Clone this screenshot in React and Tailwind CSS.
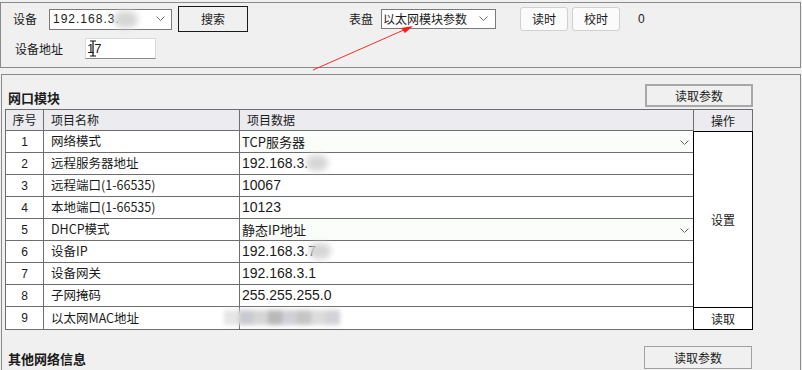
import React from "react";

const CJK = { fontFamily: '"Noto Sans CJK SC", "Noto Sans", sans-serif' };
const NUM = { fontFamily: '"Liberation Sans", "Noto Sans CJK SC", sans-serif' };

function Chevron({ className = "" }) {
  return (
    <svg width="9" height="6" viewBox="0 0 9 6" className={className}>
      <polyline points="0.5,0.5 4.5,4.5 8.5,0.5" fill="none" stroke="#6b6b6b" strokeWidth="1" />
    </svg>
  );
}

function Blur({ className = "" }) {
  return <span className={"absolute rounded-full bg-[#d6d6d6] blur-[3px] " + className} />;
}

const rows = [
  { n: "1", name: "网络模式", data: "TCP服务器", select: true },
  { n: "2", name: "远程服务器地址", data: "192.168.3.", blur: "left-[66px] w-[22px]" },
  { n: "3", name: "远程端口(1-66535)", data: "10067" },
  { n: "4", name: "本地端口(1-66535)", data: "10123" },
  { n: "5", name: "DHCP模式", data: "静态IP地址", select: true },
  { n: "6", name: "设备IP", data: "192.168.3.7", blur: "left-[69px] w-[22px]" },
  { n: "7", name: "设备网关", data: "192.168.3.1" },
  { n: "8", name: "子网掩码", data: "255.255.255.0" },
  { n: "9", name: "以太网MAC地址", data: "", mac: true },
];

export default function App() {
  return (
    <div className="relative w-[802px] h-[370px] overflow-hidden bg-[#f0f0f0] text-[12px] text-[#1a1a1a]" style={CJK}>
      {/* Top panel */}
      <div className="mt-[2px] w-[801px] h-[66px] border border-[#8a8a8a] flex flex-col">
        <div className="flex items-center mt-[3px] h-[26px]">
          <span className="ml-[12px] leading-none">设备</span>
          <div className="relative ml-[12px] w-[123px] h-[21px] bg-white border border-[#7a7a7a] flex items-center">
            <span className="ml-[3px] text-[12px] tracking-[1px]" style={NUM}>192.168.3.</span>
            <Blur className="left-[64px] top-[1px] w-[24px] h-[17px]" />
            <Chevron className="ml-auto mr-[6px]" />
          </div>
          <button className="ml-[6px] w-[70px] h-[26px] border border-[#1a1a1a] bg-[#f0f0f0] text-[12px] leading-none">搜索</button>
          <span className="ml-[101px] leading-none">表盘</span>
          <div className="ml-[8px] w-[115px] h-[20px] bg-white border border-[#7a7a7a] flex items-center">
            <span className="ml-[1px] leading-none">以太网模块参数</span>
            <Chevron className="ml-auto mr-[7px]" />
          </div>
          <button className="ml-[24px] w-[48px] h-[24px] rounded-[3px] border border-[#d0d0d0] bg-[#fbfbfb] leading-none">读时</button>
          <button className="ml-[4px] w-[48px] h-[24px] rounded-[3px] border border-[#d0d0d0] bg-[#fbfbfb] leading-none">校时</button>
          <span className="ml-[18px] leading-none" style={NUM}>0</span>
        </div>
        <div className="flex items-center mt-[6px] h-[21px]">
          <span className="ml-[14px] leading-none">设备地址</span>
          <div className="relative ml-[22px] w-[71px] h-[21px] bg-white border border-[#dadada] border-b-[#8a8a8a] flex items-center">
            <span className="ml-[1px] text-[13px]" style={NUM}>17</span>
            <svg className="absolute left-[3px] top-[1px]" width="8" height="17" viewBox="0 0 8 17">
              <path d="M1 1 H7 M4 1 V16 M1 16 H7" stroke="#111" strokeWidth="1.2" fill="none" />
            </svg>
          </div>
        </div>
      </div>

      {/* Second panel */}
      <div className="mt-[6px] ml-[1px] w-[800px] h-[300px] border border-[#8a8a8a] flex flex-col">
        <div className="flex items-end mt-[9px] h-[23px]">
          <span className="ml-[6px] text-[13px] font-bold leading-none mb-[3px]">网口模块</span>
          <button className="ml-auto mr-[47px] w-[108px] h-[23px] border-2 border-[#a8a8a8] bg-[#f0f0f0] leading-none">读取参数</button>
        </div>

        {/* Table */}
        <div className="mt-[2px] ml-[3px] flex w-[748px]">
          <div className="w-[688px] border border-r-0 border-[#6e6e6e] bg-white">
            <div className="flex h-[21px] bg-[#ebebf0] border-b border-[#6e6e6e] items-center">
              <div className="w-[38px] h-full border-r border-[#6e6e6e] flex items-center justify-center">序号</div>
              <div className="w-[196px] h-full border-r border-[#6e6e6e] flex items-center pl-[7px]">项目名称</div>
              <div className="flex-1 h-full flex items-center pl-[7px]">项目数据</div>
            </div>
            {rows.map((r, i) => (
              <div key={r.n} className={"flex h-[22px] " + (i < rows.length - 1 ? "border-b border-[#6e6e6e]" : "h-[21px]")}>
                <div className="w-[38px] h-full border-r border-[#6e6e6e] flex items-center justify-center" style={NUM}>{r.n}</div>
                <div className="w-[196px] h-full border-r border-[#6e6e6e] flex items-center pl-[7px] text-[12.5px]">{r.name}</div>
                <div className={"relative flex-1 h-full flex items-center pl-[2px] " + (r.select ? "bg-[#fbfdfb]" : "")}>
                  <span className={r.select ? "text-[13px]" : "text-[14px]"} style={r.select ? CJK : NUM}>{r.data}</span>
                  {r.blur && <Blur className={r.blur + " top-[2px] h-[16px]"} />}
                  {r.select && <Chevron className="absolute right-[4px] top-[9px]" />}
                  {r.mac && (
                    <div className="absolute left-[-16px] top-[3px] w-[116px] h-[15px] blur-[2px] flex">
                      <span className="flex-1 bg-[#e6e6e6]" />
                      <span className="flex-1 bg-[#c9c9d0]" />
                      <span className="flex-1 bg-[#d6d6d6]" />
                      <span className="flex-1 bg-[#b9b9b9]" />
                      <span className="flex-1 bg-[#d0d0d6]" />
                      <span className="flex-1 bg-[#c6c6c6]" />
                      <span className="flex-1 bg-[#dcdcdc]" />
                      <span className="flex-1 bg-[#d2d2d8]" />
                    </div>
                  )}
                </div>
              </div>
            ))}
          </div>
          <div className="w-[60px] flex flex-col">
            <div className="h-[22px] bg-[#ebebf0] border border-[#6e6e6e] border-b-0 flex items-center justify-center">操作</div>
            <div className="h-[176px] bg-white border border-black border-b-0 flex items-center justify-center">设置</div>
            <div className="h-[23px] bg-white border border-black flex items-center justify-center">读取</div>
          </div>
        </div>

        <div className="flex items-end mt-[16px] h-[23px]">
          <span className="ml-[6px] text-[13px] font-bold leading-none mb-[4px]">其他网络信息</span>
          <button className="ml-auto mr-[48px] w-[108px] h-[23px] border border-[#a0a0a0] bg-[#f0f0f0] leading-none">读取参数</button>
        </div>
      </div>

      {/* Red arrow */}
      <svg className="absolute left-0 top-0 pointer-events-none" width="802" height="370">
        <line x1="313" y1="70" x2="406" y2="29" stroke="#ff2a2a" strokeWidth="1" />
        <polygon points="413,26 401,28 405,33" fill="#ff1a1a" />
      </svg>
    </div>
  );
}
